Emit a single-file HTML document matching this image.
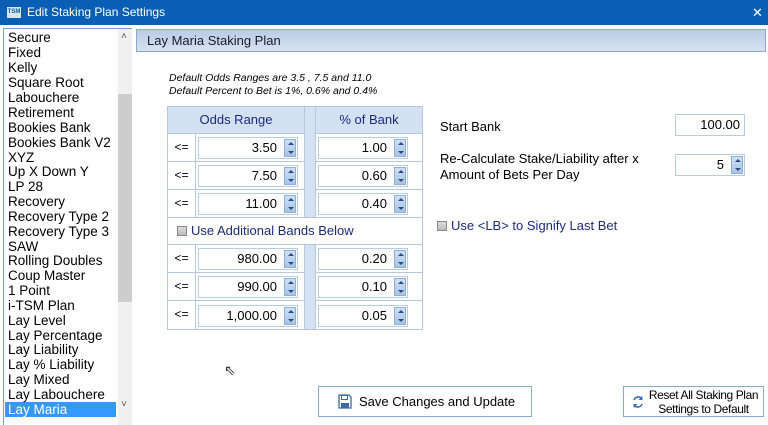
<!DOCTYPE html>
<html><head><style>
*{box-sizing:border-box;margin:0;padding:0}
body{width:768px;height:425px;overflow:hidden;background:#fff;font-family:"Liberation Sans",Arial,sans-serif;position:relative;color:#000}
.a{position:absolute}
#title{left:0;top:0;width:768px;height:25px;background:#0a5fb4;color:#fff;font-size:12px;line-height:25px}
#list{left:3px;top:28px;width:129px;height:397px;border:1px solid #7a9cc8;border-bottom:none;background:#fff}
.it{position:absolute;left:4px;font-size:13.5px;line-height:15px;height:15px;white-space:nowrap}
.sel{background:#3399ff;color:#fff;left:1px;padding-left:3px;width:111px}
#sb{left:114px;top:0;width:14px;height:396px;background:#f0f0f0}
#hdr{left:136px;top:29px;width:630px;height:23px;border:1px solid #8aa8d0;background:linear-gradient(#b9cce4,#d6e2f1);font-size:13px;line-height:21px;padding-left:10px;color:#1a1a2a}
.note{font-size:10.5px;font-style:italic;left:169px}
.cell{position:absolute;border:1px solid #b8c8dc;background:#fff}
.th{background:#d3e1f2;color:#1c2a80;font-size:13px;text-align:center;line-height:26px}
.le{font-size:12px;text-align:center;line-height:27px}
.inp{position:absolute;border:1px solid #b8cde0;background:#fff;height:22px;font-size:13px;text-align:right;line-height:20px;padding-right:20px}
.sp{position:absolute;right:1px;top:1px;width:12px;height:18px;background:linear-gradient(#cfe0f4,#a8c4e6);border:1px solid #8eb0d8}
.sp:before{content:"";position:absolute;left:3px;top:2px;border:3px solid transparent;border-bottom:3px solid #2a4a80;border-top:none}
.sp:after{content:"";position:absolute;left:3px;bottom:2px;border:3px solid transparent;border-top:3px solid #2a4a80;border-bottom:none}
.cb{display:inline-block;width:10px;height:10px;border:1px solid #8a8a8a;background:linear-gradient(#ddd,#bbb);vertical-align:-1px;margin-right:4px}
.btn{position:absolute;border:1px solid #8aa8d0;background:#fff;font-size:13px}
</style></head><body>
<div id="title" class="a"><span style="position:absolute;left:7px;top:7px;width:14px;height:11px;background:#d8e4f0;color:#0a5fb4;font-size:6px;line-height:11px;text-align:center;font-weight:bold">TSM</span><span style="position:absolute;left:27px">Edit Staking Plan Settings</span><span style="position:absolute;left:752px;font-size:13px">✕</span></div>

<div id="list" class="a">
<div class="it" style="top:1px">Secure</div>
<div class="it" style="top:16px">Fixed</div>
<div class="it" style="top:31px">Kelly</div>
<div class="it" style="top:46px">Square Root</div>
<div class="it" style="top:61px">Labouchere</div>
<div class="it" style="top:76px">Retirement</div>
<div class="it" style="top:91px">Bookies Bank</div>
<div class="it" style="top:106px">Bookies Bank V2</div>
<div class="it" style="top:121px">XYZ</div>
<div class="it" style="top:135px">Up X Down Y</div>
<div class="it" style="top:150px">LP 28</div>
<div class="it" style="top:165px">Recovery</div>
<div class="it" style="top:180px">Recovery Type 2</div>
<div class="it" style="top:195px">Recovery Type 3</div>
<div class="it" style="top:210px">SAW</div>
<div class="it" style="top:224px">Rolling Doubles</div>
<div class="it" style="top:239px">Coup Master</div>
<div class="it" style="top:254px">1 Point</div>
<div class="it" style="top:269px">i-TSM Plan</div>
<div class="it" style="top:284px">Lay Level</div>
<div class="it" style="top:299px">Lay Percentage</div>
<div class="it" style="top:313px">Lay Liability</div>
<div class="it" style="top:328px">Lay % Liability</div>
<div class="it" style="top:343px">Lay Mixed</div>
<div class="it" style="top:358px">Lay Labouchere</div>
<div class="it sel" style="top:373px">Lay Maria</div>
<div id="sb" class="a"><div class="a" style="left:0;top:65px;width:14px;height:208px;background:#cdcdcd"></div><div class="a" style="left:3px;top:2px;font-size:10px;color:#555">˄</div><div class="a" style="left:3px;top:370px;font-size:10px;color:#555">˅</div></div>
</div>

<div id="hdr" class="a">Lay Maria Staking Plan</div>
<div class="a note" style="top:72px">Default Odds Ranges are 3.5 , 7.5 and 11.0</div>
<div class="a note" style="top:85px">Default Percent to Bet is 1%, 0.6% and 0.4%</div>

<div class="a" style="left:167px;top:106px;width:256px;height:224px;border:1px solid #b8c8dc;background:#fff"></div>
<div class="cell th" style="left:167px;top:106px;width:138px;height:28px">Odds Range</div>
<div class="cell" style="left:304px;top:106px;width:12px;height:112px;background:#d3e1f2"></div>
<div class="cell" style="left:304px;top:244px;width:12px;height:86px;background:#d3e1f2"></div>
<div class="cell th" style="left:315px;top:106px;width:108px;height:28px">% of Bank</div>

<div class="cell le" style="left:167px;top:133px;width:29px;height:29px">&lt;=</div>
<div class="cell" style="left:195px;top:133px;width:110px;height:29px"></div>
<div class="cell" style="left:315px;top:133px;width:108px;height:29px"></div>
<div class="cell le" style="left:167px;top:161px;width:29px;height:29px">&lt;=</div>
<div class="cell" style="left:195px;top:161px;width:110px;height:29px"></div>
<div class="cell" style="left:315px;top:161px;width:108px;height:29px"></div>
<div class="cell le" style="left:167px;top:189px;width:29px;height:29px">&lt;=</div>
<div class="cell" style="left:195px;top:189px;width:110px;height:29px"></div>
<div class="cell" style="left:315px;top:189px;width:108px;height:29px"></div>
<div class="cell" style="left:167px;top:217px;width:256px;height:28px;font-size:13px;line-height:26px;padding-left:9px;color:#1c2a80"><span class="cb"></span>Use Additional Bands Below</div>
<div class="cell le" style="left:167px;top:244px;width:29px;height:29px">&lt;=</div>
<div class="cell" style="left:195px;top:244px;width:110px;height:29px"></div>
<div class="cell" style="left:315px;top:244px;width:108px;height:29px"></div>
<div class="cell le" style="left:167px;top:272px;width:29px;height:29px">&lt;=</div>
<div class="cell" style="left:195px;top:272px;width:110px;height:29px"></div>
<div class="cell" style="left:315px;top:272px;width:108px;height:29px"></div>
<div class="cell le" style="left:167px;top:300px;width:29px;height:30px">&lt;=</div>
<div class="cell" style="left:195px;top:300px;width:110px;height:30px"></div>
<div class="cell" style="left:315px;top:300px;width:108px;height:30px"></div>

<div class="inp" style="left:198px;top:137px;width:100px">3.50<span class="sp"></span></div>
<div class="inp" style="left:318px;top:137px;width:90px">1.00<span class="sp"></span></div>
<div class="inp" style="left:198px;top:165px;width:100px">7.50<span class="sp"></span></div>
<div class="inp" style="left:318px;top:165px;width:90px">0.60<span class="sp"></span></div>
<div class="inp" style="left:198px;top:193px;width:100px">11.00<span class="sp"></span></div>
<div class="inp" style="left:318px;top:193px;width:90px">0.40<span class="sp"></span></div>
<div class="inp" style="left:198px;top:248px;width:100px">980.00<span class="sp"></span></div>
<div class="inp" style="left:318px;top:248px;width:90px">0.20<span class="sp"></span></div>
<div class="inp" style="left:198px;top:276px;width:100px">990.00<span class="sp"></span></div>
<div class="inp" style="left:318px;top:276px;width:90px">0.10<span class="sp"></span></div>
<div class="inp" style="left:198px;top:305px;width:100px">1,000.00<span class="sp"></span></div>
<div class="inp" style="left:318px;top:305px;width:90px">0.05<span class="sp"></span></div>

<div class="a" style="left:440px;top:119px;font-size:13px">Start Bank</div>
<div class="inp" style="left:675px;top:114px;width:70px;padding-right:4px">100.00</div>
<div class="a" style="left:440px;top:151px;font-size:13px;line-height:16px">Re-Calculate Stake/Liability after x<br>Amount of Bets Per Day</div>
<div class="inp" style="left:675px;top:154px;width:70px">5<span class="sp"></span></div>
<div class="a" style="left:437px;top:218px;font-size:13px;color:#1c2a80"><span class="cb"></span>Use &lt;LB&gt; to Signify Last Bet</div>

<div class="a" style="left:224px;top:362px;font-size:14px;color:#333">⇖</div>

<div class="btn" style="left:318px;top:386px;width:214px;height:31px;line-height:29px;padding-left:40px">Save Changes and Update
<svg style="position:absolute;left:19px;top:7px" width="14" height="15" viewBox="0 0 14 15"><path d="M1 1h10l2 2v11H1z" fill="#fff" stroke="#3a6aa8" stroke-width="1.3"/><rect x="3.5" y="1.5" width="6" height="4" fill="none" stroke="#3a6aa8"/><rect x="3" y="9" width="8" height="4.5" fill="#3a6aa8"/></svg></div>
<div class="btn" style="left:623px;top:386px;width:141px;height:31px;font-size:12px;line-height:14px;text-align:center;padding:1px 0 0 20px;white-space:nowrap;letter-spacing:-0.4px">Reset All Staking Plan<br>Settings to Default
<svg style="position:absolute;left:7px;top:8px" width="14" height="14" viewBox="0 0 14 14"><path d="M3 5a4.5 4.5 0 0 1 8-1M11 9a4.5 4.5 0 0 1-8 1" fill="none" stroke="#3a70b8" stroke-width="1.6"/><path d="M11.5 1v4h-4z M2.5 13V9h4z" fill="#3a70b8"/></svg></div>
</body></html>
